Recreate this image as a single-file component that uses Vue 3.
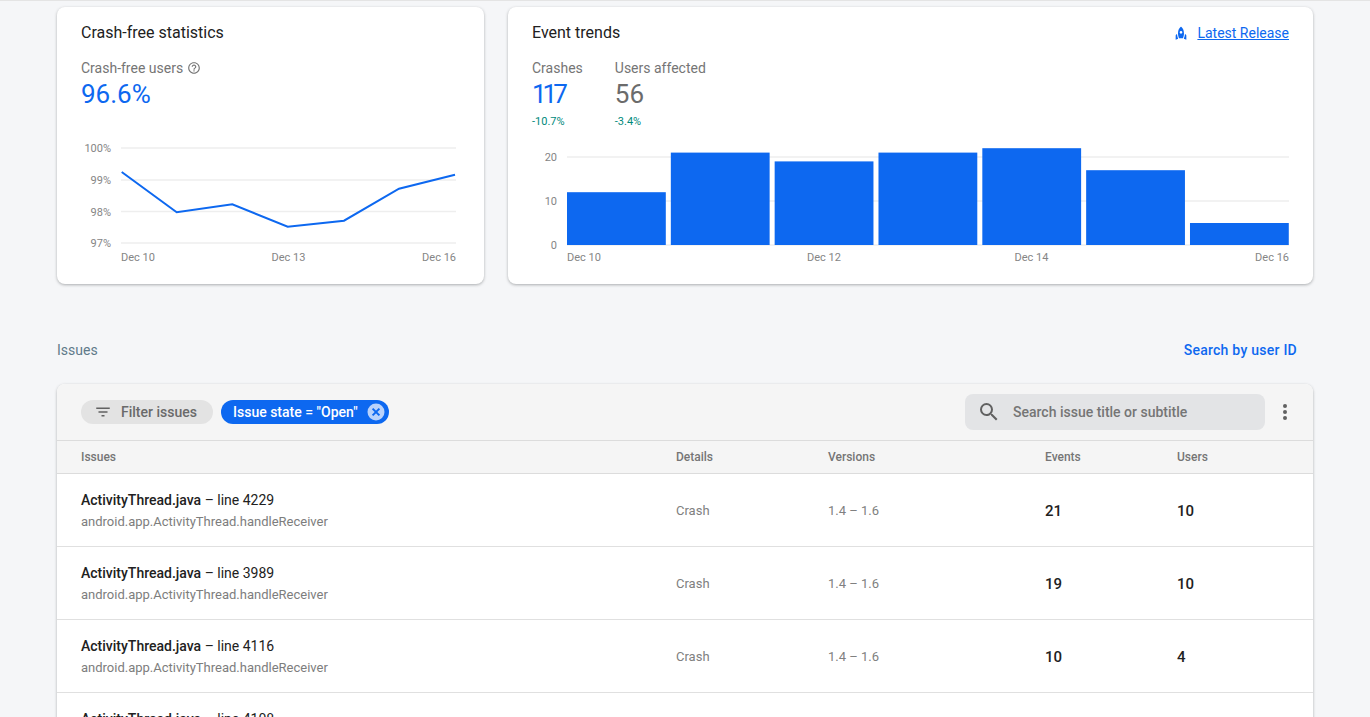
<template>
  <div class="page">
    <div class="charts">
      <section class="card stats-card">
        <h2 class="card-title">Crash-free statistics</h2>
        <div class="metric-label">
          Crash-free users
          <svg class="help-icon" viewBox="0 0 24 24"><path d="M11 18h2v-2h-2v2zm1-16C6.48 2 2 6.48 2 12s4.48 10 10 10 10-4.48 10-10S17.52 2 12 2zm0 18c-4.41 0-8-3.59-8-8s3.59-8 8-8 8 3.59 8 8-3.59 8-8 8zm0-14c-2.21 0-4 1.79-4 4h2c0-1.1.9-2 2-2s2 .9 2 2c0 2-3 1.75-3 5h2c0-2.25 3-2.5 3-5 0-2.21-1.79-4-4-4z"/></svg>
        </div>
        <div class="metric-value blue">96.6%</div>
        <svg class="chart line-chart" viewBox="0 0 427 150" width="427" height="150">
          <g v-for="g in lineGrid" :key="g.label">
            <line x1="64" x2="399" :y1="g.y" :y2="g.y" class="grid" />
            <text x="54" :y="g.y + 4" text-anchor="end" class="tick">{{ g.label }}</text>
          </g>
          <polyline :points="linePoints" class="trend" />
          <text x="64" y="127" class="tick">Dec 10</text>
          <text x="231.5" y="127" text-anchor="middle" class="tick">Dec 13</text>
          <text x="399" y="127" text-anchor="end" class="tick">Dec 16</text>
        </svg>
      </section>

      <section class="card trends-card">
        <div class="trends-head">
          <h2 class="card-title">Event trends</h2>
          <a class="release-link">
            <svg class="rocket" viewBox="0 0 24 24"><path d="M12 2.5s4.5 2.04 4.5 10.5c0 2.49-1.04 5.57-1.6 7H9.1c-.56-1.43-1.6-4.51-1.6-7C7.5 4.54 12 2.5 12 2.5zm2 8.5c0-1.1-.9-2-2-2s-2 .9-2 2 .9 2 2 2 2-.9 2-2zm-6.31 9.52c-.48-1.23-1.52-4.17-1.67-6.87l-1.13.75c-.56.38-.89 1-.89 1.67V22l3.69-1.48zM20 22v-5.93c0-.67-.33-1.29-.89-1.66l-1.13-.75c-.15 2.69-1.2 5.64-1.67 6.87L20 22z"/></svg>
            <span>Latest Release</span>
          </a>
        </div>
        <div class="metrics">
          <div>
            <div class="metric-label">Crashes</div>
            <div class="metric-value blue tight">117</div>
            <div class="delta">-10.7%</div>
          </div>
          <div>
            <div class="metric-label">Users affected</div>
            <div class="metric-value grey">56</div>
            <div class="delta">-3.4%</div>
          </div>
        </div>
        <svg class="chart bar-chart" viewBox="0 0 805 150" width="805" height="150">
          <g v-for="g in barGrid" :key="g.label">
            <line x1="59" x2="781" :y1="g.y" :y2="g.y" class="grid" />
            <text x="49" :y="g.y + 4" text-anchor="end" class="tick">{{ g.label }}</text>
          </g>
          <rect
            v-for="b in bars"
            :key="b.x"
            :x="b.x"
            :y="b.y"
            width="98.8"
            :height="b.h"
            class="bar"
          />
          <text x="59" y="127" class="tick">Dec 10</text>
          <text x="316" y="127" text-anchor="middle" class="tick">Dec 12</text>
          <text x="523.5" y="127" text-anchor="middle" class="tick">Dec 14</text>
          <text x="781" y="127" text-anchor="end" class="tick">Dec 16</text>
        </svg>
      </section>
    </div>

    <div class="issues-head">
      <span class="issues-title">Issues</span>
      <a class="user-search">Search by user ID</a>
    </div>

    <section class="table-card">
      <div class="toolbar">
        <div class="filter-chip">
          <svg class="filter-icon" viewBox="0 0 24 24"><path d="M10 18h4v-2h-4v2zM3 6v2h18V6H3zm3 7h12v-2H6v2z"/></svg>
          Filter issues
        </div>
        <div class="state-chip">
          Issue state = "Open"
          <svg class="chip-close" viewBox="0 0 20 20">
            <circle cx="10" cy="10" r="8.5" fill="#b9d2fb" />
            <path d="M6.6 6.6l6.8 6.8M13.4 6.6l-6.8 6.8" stroke="#0d68f0" stroke-width="2" fill="none" />
          </svg>
        </div>
        <div class="search-box">
          <svg class="search-icon" viewBox="0 0 24 24"><path d="M15.5 14h-.79l-.28-.27A6.47 6.47 0 0 0 16 9.5 6.5 6.5 0 1 0 9.5 16c1.61 0 3.09-.59 4.23-1.57l.27.28v.79l5 4.99L20.49 19l-4.99-5zm-6 0C7.01 14 5 11.99 5 9.5S7.01 5 9.5 5 14 7.01 14 9.5 11.99 14 9.5 14z"/></svg>
          <span>Search issue title or subtitle</span>
        </div>
        <div class="kebab"><i></i><i></i><i></i></div>
      </div>

      <div class="row header-row">
        <div>Issues</div>
        <div>Details</div>
        <div>Versions</div>
        <div>Events</div>
        <div>Users</div>
      </div>

      <div v-for="issue in issues" :key="issue.line" class="row issue-row">
        <div class="issue-cell">
          <div class="issue-title"><b>ActivityThread.java</b> – line {{ issue.line }}</div>
          <div class="issue-sub">android.app.ActivityThread.handleReceiver</div>
        </div>
        <div class="muted">Crash</div>
        <div class="muted">1.4 – 1.6</div>
        <div class="count">{{ issue.events }}</div>
        <div class="count">{{ issue.users }}</div>
      </div>
    </section>
  </div>
</template>

<script setup>
const lineGrid = [
  { label: '100%', y: 14 },
  { label: '99%', y: 46 },
  { label: '98%', y: 77.5 },
  { label: '97%', y: 109 }
]

// points in chart coords
const linePoints = [
  [64.7, 38], [119.7, 78.3], [175.3, 70.3], [230.7, 92.7], [287, 86.7], [342, 54.7], [398, 40.7]
].map(p => p.join(',')).join(' ')

const barGrid = [
  { label: '20', y: 23 },
  { label: '10', y: 67 },
  { label: '0', y: 111 }
]

const bars = [12, 21, 19, 21, 22, 17, 5].map((v, i) => ({
  x: 59 + i * 103.83,
  y: 111 - v * 4.4,
  h: v * 4.4
}))

const issues = [
  { line: 4229, events: 21, users: 10 },
  { line: 3989, events: 19, users: 10 },
  { line: 4116, events: 10, users: 4 },
  { line: 4108, events: 8, users: 4 }
]
</script>

<style scoped>
.page {
  height: 717px;
  overflow: hidden;
  box-sizing: border-box;
  padding: 7px 57px 0;
  background: #f5f6f8;
  border-top: 1px solid #e4e4e4;
  font-family: Roboto, "Liberation Sans", sans-serif;
  color: #212121;
}

.charts {
  display: flex;
  gap: 24px;
  margin-top: -1px;
}

.card {
  position: relative;
  height: 277px;
  box-sizing: border-box;
  padding: 16px 24px 0;
  background: #fff;
  border-radius: 8px;
  box-shadow: 0 1px 3px rgba(60, 64, 67, 0.4);
}

.stats-card {
  width: 427px;
}

.trends-card {
  flex: 1;
}

.card-title {
  margin: 0;
  font-size: 16px;
  line-height: 20px;
  font-weight: 400;
}

.metric-label {
  display: flex;
  align-items: center;
  gap: 4px;
  margin-top: 15px;
  font-size: 14px;
  line-height: 20px;
  color: #757575;
}

.help-icon {
  width: 14px;
  height: 14px;
  fill: #757575;
}

.metric-value {
  font-size: 26px;
  line-height: 32px;
  font-weight: 400;
}

.tight {
  letter-spacing: -4px;
}

.blue {
  color: #0d68f0;
}

.grey {
  color: #6b6b6b;
}

.delta {
  margin-top: 5px;
  font-size: 11px;
  line-height: 14px;
  color: #00897b;
}

.trends-head {
  display: flex;
  justify-content: space-between;
  align-items: center;
}

.release-link {
  display: flex;
  align-items: center;
  gap: 8px;
  font-size: 14px;
  color: #0d68f0;
}

.release-link span {
  text-decoration: underline;
}

.rocket {
  width: 16px;
  height: 16px;
  fill: #0d68f0;
}

.metrics {
  display: flex;
  gap: 32px;
}

.chart {
  position: absolute;
  left: 0;
  bottom: 0;
  display: block;
}

.grid {
  stroke: #eeeeee;
  stroke-width: 1.5;
}

.tick {
  font-size: 11px;
  fill: #858585;
}

.trend {
  fill: none;
  stroke: #0d68f0;
  stroke-width: 2;
}

.bar {
  fill: #0d68f0;
}

.issues-head {
  display: flex;
  justify-content: space-between;
  align-items: center;
  height: 20px;
  margin-top: 56px;
  padding-right: 16px;
}

.issues-title {
  font-size: 14px;
  color: #5f7a8a;
}

.user-search {
  font-size: 14px;
  font-weight: 500;
  letter-spacing: 0.25px;
  color: #0d68f0;
}

.table-card {
  margin-top: 24px;
  background: #fff;
  border-radius: 8px 8px 0 0;
  box-shadow: 0 1px 3px rgba(60, 64, 67, 0.4);
  overflow: hidden;
}

.toolbar {
  display: flex;
  align-items: center;
  height: 56px;
  padding: 0 8px 0 24px;
  background: #f5f5f5;
  border-bottom: 1px solid #dcdcdc;
}

.filter-chip,
.state-chip {
  display: flex;
  align-items: center;
  height: 24px;
  border-radius: 12px;
  font-size: 14px;
  font-weight: 500;
}

.filter-chip {
  width: 132px;
  box-sizing: border-box;
  padding-left: 13px;
  gap: 9px;
  background: #e3e3e3;
  color: #6a6a6a;
}

.filter-icon {
  width: 18px;
  height: 18px;
  fill: #616161;
}

.state-chip {
  width: 168px;
  box-sizing: border-box;
  margin-left: 8px;
  padding-left: 12px;
  gap: 8px;
  background: #0d68f0;
  color: #fff;
}

.chip-close {
  width: 20px;
  height: 20px;
}

.search-box {
  display: flex;
  align-items: center;
  gap: 12px;
  width: 300px;
  height: 36px;
  box-sizing: border-box;
  margin-left: auto;
  padding-left: 12px;
  background: #e3e4e6;
  border-radius: 8px;
  font-size: 14px;
  font-weight: 500;
  color: #757575;
}

.search-icon {
  width: 24px;
  height: 24px;
  fill: #616161;
}

.kebab {
  display: flex;
  flex-direction: column;
  align-items: center;
  gap: 2px;
  width: 40px;
}

.kebab i {
  width: 4px;
  height: 4px;
  border-radius: 50%;
  background: #616161;
}

.row {
  display: grid;
  grid-template-columns: 595px 152px 217px 132px 1fr;
  align-items: center;
  padding-left: 24px;
  border-bottom: 1px solid #e0e0e0;
}

.header-row {
  height: 32px;
  background: #f5f5f5;
  border-bottom-color: #dcdcdc;
  font-size: 12px;
  font-weight: 500;
  color: #757575;
}

.issue-row {
  height: 72px;
}

.issue-cell {
  padding-top: 1px;
}

.issue-title {
  font-size: 14px;
  line-height: 21px;
  color: #212121;
}

.issue-title b {
  font-weight: 500;
}

.issue-sub {
  font-size: 13px;
  line-height: 21px;
  color: #7d7d7d;
}

.muted {
  font-size: 13px;
  color: #808080;
}

.count {
  padding-top: 1px;
  font-size: 15px;
  font-weight: 500;
  color: #212121;
}
</style>
